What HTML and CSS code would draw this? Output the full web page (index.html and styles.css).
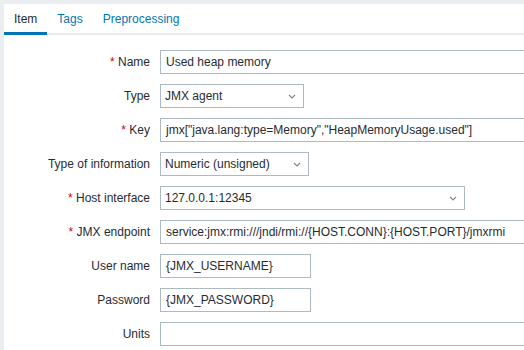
FILE: index.html
```html
<!DOCTYPE html>
<html>
<head>
<meta charset="utf-8">
<link rel="stylesheet" href="styles.css">
</head>
<body>
<div class="panel">
  <nav class="tabs">
    <span class="tab active">Item</span>
    <span class="tab">Tags</span>
    <span class="tab">Preprocessing</span>
  </nav>
  <div class="form">
    <div class="lbl"><span class="req">*</span> Name</div>
    <div class="field"><div class="inp w-std">Used heap memory</div></div>

    <div class="lbl">Type</div>
    <div class="field"><div class="inp sel w-type">JMX agent<svg class="chev" width="8" height="5" viewBox="0 0 8 5"><path d="M1 1 L4 4 L7 1" fill="none" stroke="#768d99" stroke-width="1.2"/></svg></div></div>

    <div class="lbl"><span class="req">*</span> Key</div>
    <div class="field"><div class="inp w-std">jmx["java.lang:type=Memory","HeapMemoryUsage.used"]</div></div>

    <div class="lbl">Type of information</div>
    <div class="field"><div class="inp sel w-info">Numeric (unsigned)<svg class="chev" width="8" height="5" viewBox="0 0 8 5"><path d="M1 1 L4 4 L7 1" fill="none" stroke="#768d99" stroke-width="1.2"/></svg></div></div>

    <div class="lbl"><span class="req">*</span> Host interface</div>
    <div class="field"><div class="inp sel w-iface">127.0.0.1:12345<svg class="chev" width="8" height="5" viewBox="0 0 8 5"><path d="M1 1 L4 4 L7 1" fill="none" stroke="#768d99" stroke-width="1.2"/></svg></div></div>

    <div class="lbl"><span class="req">*</span> JMX endpoint</div>
    <div class="field"><div class="inp w-std">service:jmx:rmi:///jndi/rmi://{HOST.CONN}:{HOST.PORT}/jmxrmi</div></div>

    <div class="lbl">User name</div>
    <div class="field"><div class="inp w-small">{JMX_USERNAME}</div></div>

    <div class="lbl">Password</div>
    <div class="field"><div class="inp w-small">{JMX_PASSWORD}</div></div>

    <div class="lbl">Units</div>
    <div class="field"><div class="inp w-std"></div></div>
  </div>
</div>
</body>
</html>
```
FILE: styles.css
```css
html, body {
  margin: 0;
  padding: 0;
  overflow: hidden;
  background: #ebeef0;
}
body {
  padding: 4px 0 0 4px;
  width: 524px;
  height: 350px;
  box-sizing: border-box;
  font-family: "Liberation Sans", Arial, sans-serif;
  font-size: 12px;
  color: #1f2c33;
}
.panel {
  background: #ffffff;
  height: 346px;
  width: 520px;
  overflow: hidden;
}
.tabs {
  display: flex;
  height: 29px;
  border-bottom: 2px solid #ebebeb;
}
.tab {
  display: block;
  padding: 8px 10px 0 10px;
  line-height: 14px;
  color: #0275b8;
  box-sizing: border-box;
  height: 31px;
  border-bottom: 3px solid transparent;
}
.tab.active {
  color: #1f2c33;
  border-bottom-color: #0275b8;
}
.form {
  display: grid;
  grid-template-columns: 146px minmax(0, 1fr);
  column-gap: 10px;
  row-gap: 10px;
  padding-top: 15px;
}
.lbl {
  text-align: right;
  line-height: 24px;
  height: 24px;
  white-space: nowrap;
}
.req {
  color: #d40000;
}
.field {
  height: 24px;
  min-width: 0;
}
.inp {
  box-sizing: border-box;
  height: 24px;
  border: 1px solid #acbbc2;
  padding: 0 5px;
  line-height: 22px;
  white-space: nowrap;
  overflow: hidden;
  background: #fff;
}
.sel {
  display: flex;
  align-items: center;
  justify-content: space-between;
  padding: 0 7px 0 4px;
}
.chev {
  flex: none;
}
.w-std { width: 453px; }
.w-type { width: 144px; }
.w-info { width: 149px; }
.w-iface { width: 305px; }
.w-small { width: 151px; }
```
